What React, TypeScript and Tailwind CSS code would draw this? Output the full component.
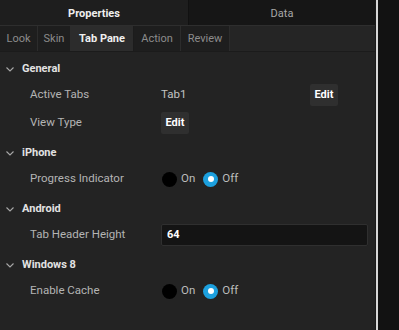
import React from "react";

const Chevron = () => (
  <svg width="10" height="10" viewBox="0 0 10 10" className="shrink-0">
    <path d="M1.5 3.5 L5 7 L8.5 3.5" fill="none" stroke="#a8a8a8" strokeWidth="1.1" />
  </svg>
);

const Section = ({ title, children }: { title: string; children: React.ReactNode }) => (
  <div className="pb-[4px]">
    <div className="flex items-center h-[26px] pl-[5px] gap-[7px]">
      <Chevron />
      <span className="text-[11px] font-bold text-[#e2e2e2]">{title}</span>
    </div>
    <div className="flex flex-col gap-[2px]">{children}</div>
  </div>
);

const Row = ({ label, children }: { label: string; children?: React.ReactNode }) => (
  <div className="flex items-center h-[26px]">
    <div className="w-[161px] pl-[30px] text-[11.5px] text-[#b4b4b4] shrink-0">{label}</div>
    <div className="flex-1 flex items-center pr-[7px]">{children}</div>
  </div>
);

const EditBtn = () => (
  <div className="h-[22px] w-[28px] flex items-center justify-center rounded-[2px] bg-[#2f2f2f] text-[11px] font-bold text-white">
    Edit
  </div>
);

const Radios = () => (
  <div className="flex items-center ml-[1px] text-[11.5px] text-[#bcbcbc]">
    <div className="w-[15px] h-[15px] rounded-full bg-black" />
    <span className="ml-[4px]">On</span>
    <div className="ml-[8px] w-[15px] h-[15px] rounded-full bg-[#1ca0de] flex items-center justify-center">
      <div className="w-[6px] h-[6px] rounded-full bg-white" />
    </div>
    <span className="ml-[4px]">Off</span>
  </div>
);

export default function App() {
  const tabs: [string, string][] = [
    ["Look", "w-[38px]"],
    ["Skin", "w-[33px]"],
    ["Tab Pane", "w-[63px]"],
    ["Action", "w-[47px]"],
    ["Review", "w-[49px]"],
  ];
  return (
    <div
      className="w-[399px] h-[330px] flex bg-[#121212] overflow-hidden"
      style={{ fontFamily: "Roboto, 'Liberation Sans', sans-serif" }}
    >
      <div className="w-[376px] h-full bg-[#232323] flex flex-col border-r border-[#1a1a1a]">
        <div className="flex h-[26px] border-b border-[#2e2e2e]">
          <div className="w-[189px] pt-[3px] flex items-center justify-center bg-[#1e1e1e] text-[11px] font-bold text-[#eeeeee] border-r border-[#111]">
            Properties
          </div>
          <div className="flex-1 pt-[3px] flex items-center justify-center bg-[#161616] text-[11px] text-[#a8a8a8]">
            Data
          </div>
        </div>
        <div className="flex h-[26px] bg-[#252525] border-b border-[#1b1b1b]">
          {tabs.map(([t, w]) => (
            <div
              key={t}
              className={
                t === "Tab Pane"
                  ? `${w} pt-[2px] flex items-center justify-center bg-[#2c2c2c] text-[11px] font-bold text-[#f0f0f0] border-r border-[#1c1c1c]`
                  : `${w} pt-[2px] flex items-center justify-center bg-[#1e1e1e] text-[11px] text-[#8c8c8c] border-r border-[#2c2c2c]`
              }
            >
              {t}
            </div>
          ))}
        </div>
        <div className="pt-[4px]">
          <Section title="General">
            <Row label="Active Tabs">
              <span className="text-[11.5px] text-[#c4c4c4]">Tab1</span>
              <div className="ml-auto mr-[30px]">
                <EditBtn />
              </div>
            </Row>
            <Row label="View Type">
              <EditBtn />
            </Row>
          </Section>
          <Section title="iPhone">
            <Row label="Progress Indicator">
              <Radios />
            </Row>
          </Section>
          <Section title="Android">
            <Row label="Tab Header Height">
              <div className="flex-1 h-[22px] bg-[#141414] border border-[#2f2f2f] rounded-[2px] flex items-center pl-[5px] text-[11px] font-bold text-white">
                64
              </div>
            </Row>
          </Section>
          <Section title="Windows 8">
            <Row label="Enable Cache">
              <Radios />
            </Row>
          </Section>
        </div>
      </div>
      <div className="w-[2px] h-full bg-[#d8d8d8]" />
      <div className="flex-1 h-full bg-[#121212]" />
    </div>
  );
}
